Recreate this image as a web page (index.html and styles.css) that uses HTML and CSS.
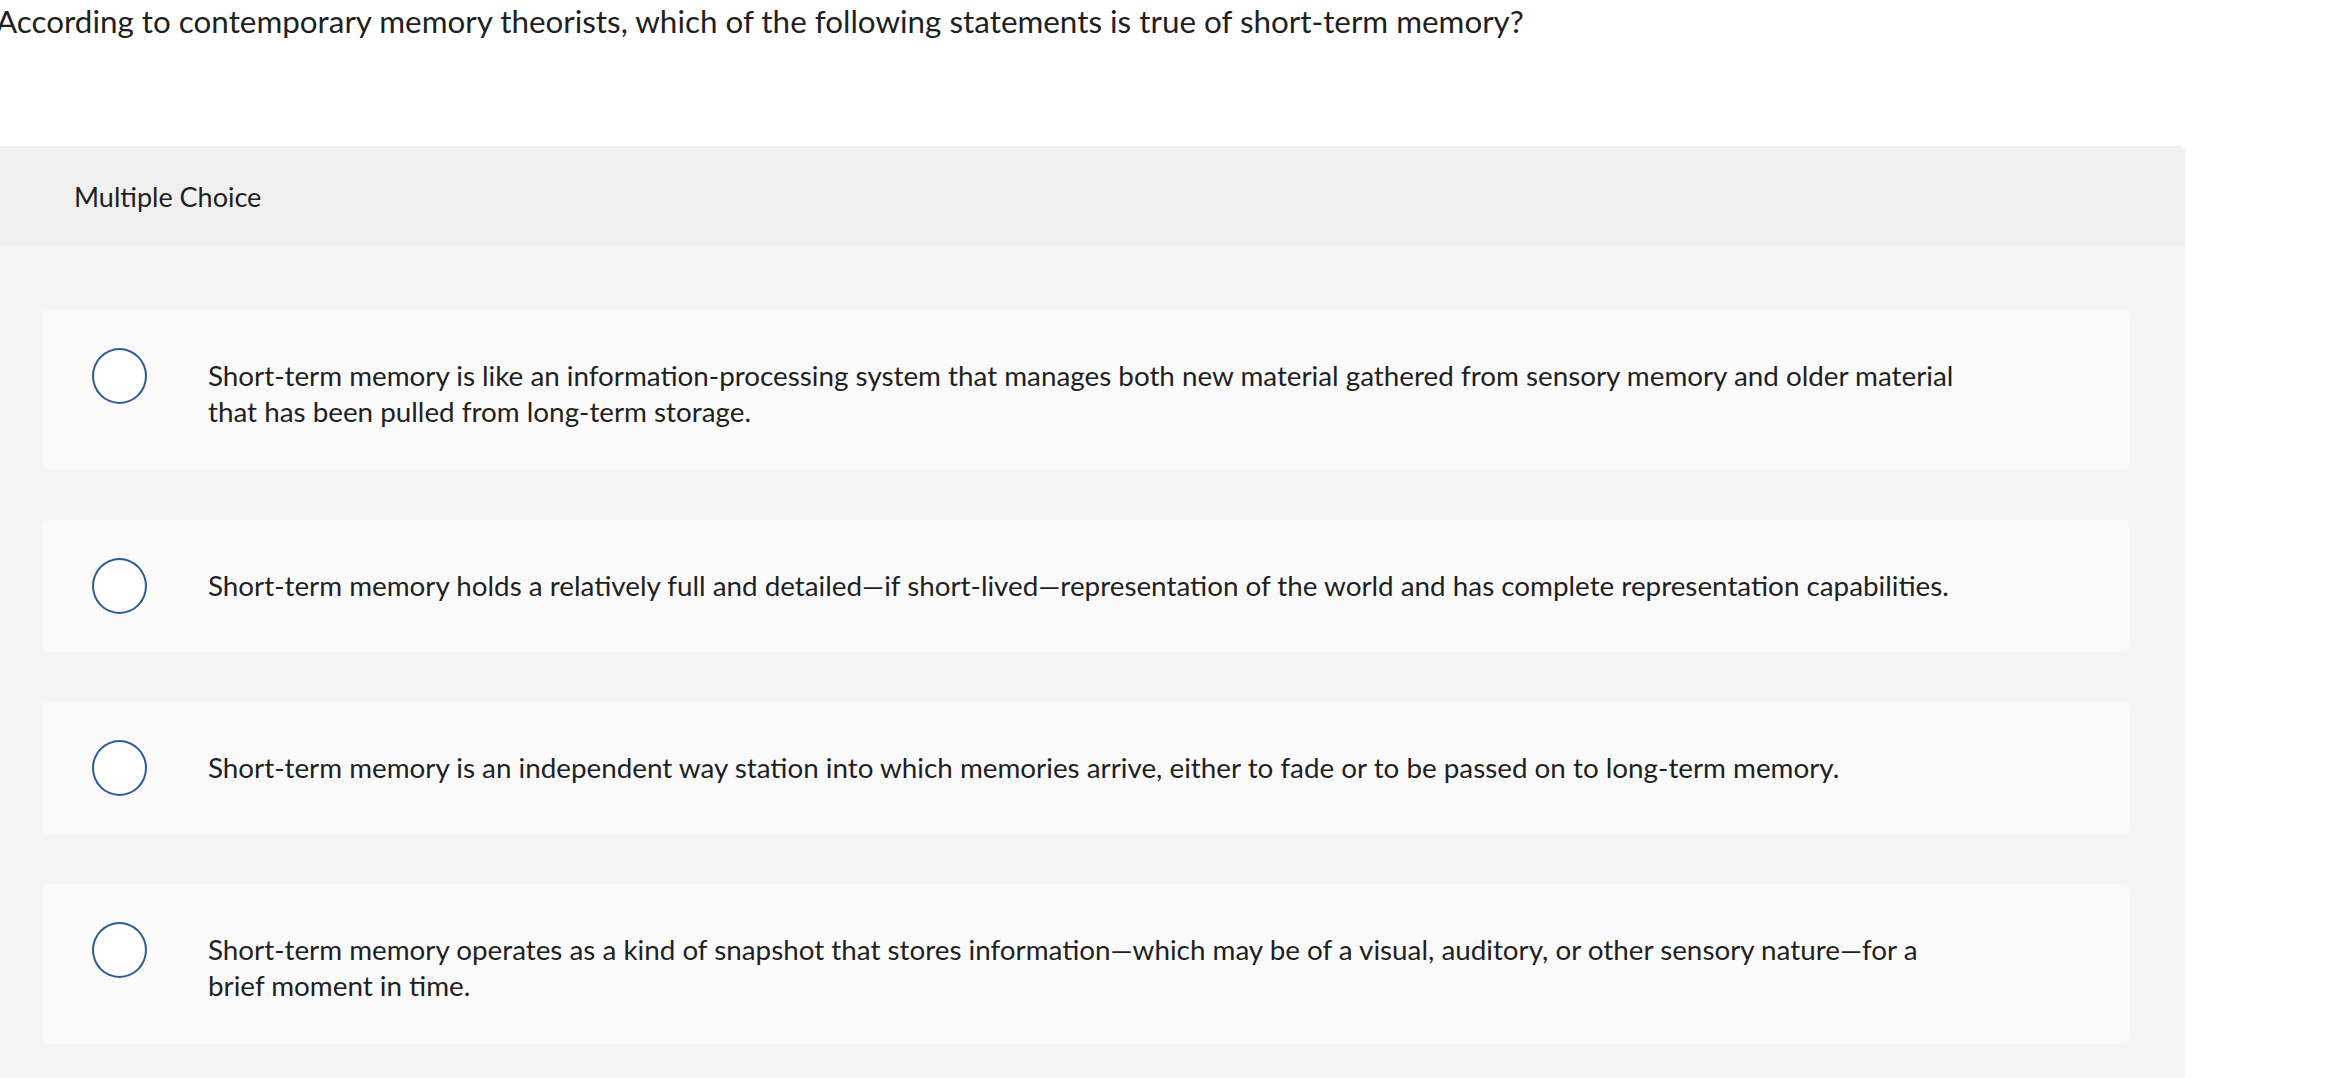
FILE: index.html
```html
<!DOCTYPE html>
<html lang="en">
<head>
<meta charset="utf-8">
<title>Multiple Choice</title>
<link rel="stylesheet" href="styles.css">
</head>
<body>
<main class="page">
  <p class="question">According to contemporary memory theorists, which of the following statements is true of short-term memory?</p>
  <section class="panel">
    <header class="panel-head">Multiple Choice</header>
    <div class="panel-body">
      <label class="choice">
        <span class="radio"></span>
        <span class="choice-text">Short-term memory is like an information-processing system that manages both new material gathered from sensory memory and older material that has been pulled from long-term storage.</span>
      </label>
      <label class="choice">
        <span class="radio"></span>
        <span class="choice-text">Short-term memory holds a relatively full and detailed—if short-lived—representation of the world and has complete representation capabilities.</span>
      </label>
      <label class="choice">
        <span class="radio"></span>
        <span class="choice-text">Short-term memory is an independent way station into which memories arrive, either to fade or to be passed on to long-term memory.</span>
      </label>
      <label class="choice">
        <span class="radio"></span>
        <span class="choice-text">Short-term memory operates as a kind of snapshot that stores information—which may be of a visual, auditory, or other sensory nature—for a brief moment in time.</span>
      </label>
    </div>
  </section>
</main>
</body>
</html>
```
FILE: styles.css
```css
html, body {
  margin: 0;
  padding: 0;
  background: #ffffff;
  overflow: hidden;
}

body {
  font-family: "Lato", "Open Sans", sans-serif;
  color: #1f1f1f;
}

.page {
  display: flex;
  flex-direction: column;
  align-items: flex-start;
}

.question {
  margin: 0 0 0 -4px;
  font-size: 31.4px;
  line-height: 42px;
  color: #1f1f1f;
  white-space: nowrap;
}

.panel {
  margin: 104px 0 0 -14px;
  width: 2199px;
  border-radius: 6px 6px 0 0;
  overflow: hidden;
  background: #f5f5f5;
}

.panel-head {
  height: 100px;
  display: flex;
  align-items: center;
  padding-left: 88px;
  background: #f0f0f0;
  font-size: 27px;
  color: #1f1f1f;
}

.panel-body {
  display: flex;
  flex-direction: column;
  gap: 50px;
  padding: 64px 56px 64px;
  background: #f5f5f5;
}

.choice {
  display: flex;
  align-items: flex-start;
  gap: 61px;
  padding: 38px 154px 38px 50px;
  background: #fafafa;
  border-radius: 6px;
  cursor: pointer;
}

.radio {
  flex: none;
  width: 55px;
  height: 56px;
  box-sizing: border-box;
  border: 2px solid #2d5a94;
  border-radius: 50%;
  background: #ffffff;
}

.choice-text {
  flex: 1;
  padding: 10px 0 2px;
  font-size: 27.8px;
  line-height: 36px;
  color: #1f1f1f;
}
```
